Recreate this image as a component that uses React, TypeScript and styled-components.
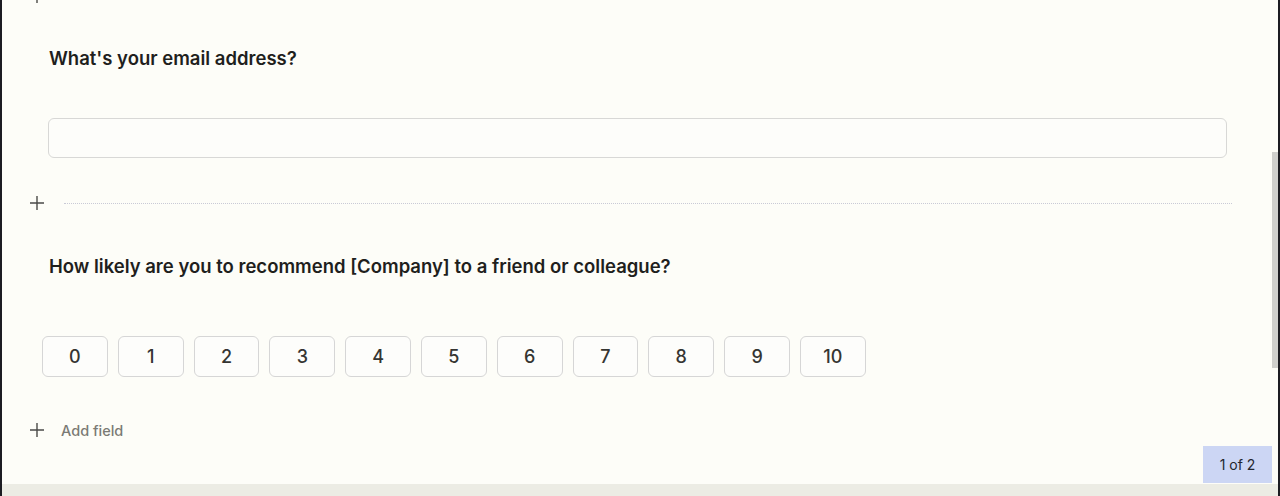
import React from "react";
import styled, { createGlobalStyle } from "styled-components";

const Global = createGlobalStyle`
  html, body { margin: 0; padding: 0; background: #fdfdf8; }
  body { font-family: Inter, "Noto Sans", sans-serif; }
`;

const Frame = styled.div`
  position: relative;
  width: 1280px;
  height: 496px;
  box-sizing: border-box;
  border-left: 2px solid #1c1c22;
  border-right: 2px solid #1c1c22;
  background: #fdfdf8;
  overflow: hidden;
  display: flex;
  flex-direction: column;
`;

const Content = styled.div`
  flex: 1;
  display: flex;
  flex-direction: column;
`;

const Question = styled.div<{ $top: number }>`
  margin-top: ${(p) => p.$top}px;
  padding-left: 47px;
  font-size: 18.5px;
  line-height: 24px;
  font-weight: 600;
  color: #1f1f1d;
`;

const Input = styled.div`
  margin: 48px 0 0 46px;
  width: 1179px;
  height: 40px;
  box-sizing: border-box;
  border: 1px solid #d8d8d6;
  border-radius: 6px;
  background: #fdfdfa;
`;

const AddRow = styled.div<{ $top: number; $gap?: number }>`
  display: flex;
  align-items: center;
  margin-top: ${(p) => p.$top}px;
  padding-left: 27px;
  height: 16px;
  gap: ${(p) => p.$gap ?? 16}px;
`;

const Divider = styled.div`
  flex: 0 0 1168px;
  border-top: 1px dotted #c9cad6;
`;

const AddLabel = styled.span`
  font-size: 14.5px;
  color: #7a7a74;
  font-weight: 500;
`;

const Scale = styled.div`
  display: flex;
  gap: 10px;
  margin: 58px 0 0 40px;
`;

const ScaleButton = styled.div`
  width: 65.8px;
  height: 41px;
  box-sizing: border-box;
  border: 1px solid #d6d6d6;
  border-radius: 6px;
  background: #fdfdfb;
  display: flex;
  align-items: center;
  justify-content: center;
  font-size: 18px;
  font-weight: 500;
  color: #353532;
`;

const BottomStrip = styled.div`
  height: 12px;
  background: #ecece4;
`;

const Scrollbar = styled.div`
  position: absolute;
  right: 0;
  top: 152px;
  width: 6px;
  height: 216px;
  background: #cfcfcc;
`;

const Pager = styled.div`
  position: absolute;
  right: 6px;
  bottom: 13px;
  width: 69px;
  height: 37px;
  background: #ccd6f4;
  display: flex;
  align-items: center;
  justify-content: center;
  font-size: 14px;
  color: #24262e;
`;

const PlusIcon = () => (
  <svg width="16" height="16" viewBox="0 0 16 16" style={{ flex: "0 0 16px" }}>
    <path d="M8 1v14M1 8h14" stroke="#4a4a48" strokeWidth="1.4" fill="none" />
  </svg>
);

export default function App() {
  const values = Array.from({ length: 11 }, (_, i) => i);
  return (
    <>
      <Global />
      <Frame>
        <Content>
          <AddRow $top={-12}>
            <PlusIcon />
          </AddRow>
          <Question $top={42}>What's your email address?</Question>
          <Input />
          <AddRow $top={37} $gap={19}>
            <PlusIcon />
            <Divider />
          </AddRow>
          <Question $top={43}>
            How likely are you to recommend [Company] to a friend or colleague?
          </Question>
          <Scale>
            {values.map((v) => (
              <ScaleButton key={v}>{v}</ScaleButton>
            ))}
          </Scale>
          <AddRow $top={45}>
            <PlusIcon />
            <AddLabel>Add field</AddLabel>
          </AddRow>
        </Content>
        <BottomStrip />
        <Scrollbar />
        <Pager>1 of 2</Pager>
      </Frame>
    </>
  );
}
